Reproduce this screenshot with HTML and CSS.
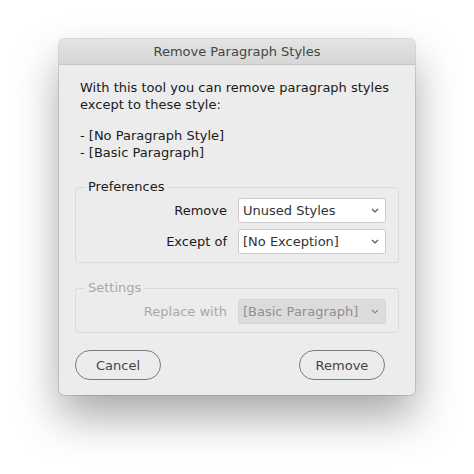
FILE: index.html
```html
<!DOCTYPE html>
<html>
<head>
<meta charset="utf-8">
<link rel="stylesheet" href="styles.css">
</head>
<body>
<div class="dialog">
  <div class="titlebar">Remove Paragraph Styles</div>
  <div class="content">
    <p class="intro">With this tool you can remove paragraph styles<br>except to these style:</p>
    <p class="list">- [No Paragraph Style]<br>- [Basic Paragraph]</p>
    <fieldset class="group">
      <legend>Preferences</legend>
      <div class="grid">
        <label class="lbl">Remove</label>
        <div class="select"><span>Unused Styles</span><svg class="chev" width="8" height="5" viewBox="0 0 8 5"><path d="M1 1l3 3 3-3" fill="none" stroke="#555" stroke-width="1.2"/></svg></div>
        <label class="lbl">Except of</label>
        <div class="select"><span>[No Exception]</span><svg class="chev" width="8" height="5" viewBox="0 0 8 5"><path d="M1 1l3 3 3-3" fill="none" stroke="#555" stroke-width="1.2"/></svg></div>
      </div>
    </fieldset>
    <fieldset class="group disabled">
      <legend>Settings</legend>
      <div class="grid">
        <label class="lbl">Replace with</label>
        <div class="select"><span>[Basic Paragraph]</span><svg class="chev" width="8" height="5" viewBox="0 0 8 5"><path d="M1 1l3 3 3-3" fill="none" stroke="#888" stroke-width="1.2"/></svg></div>
      </div>
    </fieldset>
    <div class="buttons">
      <button class="btn">Cancel</button>
      <button class="btn">Remove</button>
    </div>
  </div>
</div>
</body>
</html>
```

FILE: styles.css
```css
html, body {
  margin: 0;
  padding: 0;
  background: #ffffff;
}
body {
  width: 474px;
  height: 474px;
  font-family: "DejaVu Sans", "Noto Sans", sans-serif;
  font-size: 13px;
  color: #1a1a1a;
}
.dialog {
  margin: 39px 0 0 59px;
  width: 356px;
  height: 356px;
  box-sizing: border-box;
  background: #ececec;
  border-radius: 5px;
  box-shadow: 0 22px 44px rgba(0,0,0,0.34), 0 0 0 1px rgba(0,0,0,0.12);
  overflow: hidden;
}
.titlebar {
  height: 25px;
  line-height: 25px;
  text-align: center;
  background: linear-gradient(#e4e4e4, #d6d6d6);
  border-bottom: 1px solid #c4c4c4;
  color: #444;
  font-size: 13px;
}
.content {
  padding: 14px 16px 0 16px;
}
.intro, .list {
  margin: 0 0 0 5px;
  line-height: 17px;
  color: #1a1a1a;
}
.list {
  margin-top: 14px;
}
.group {
  margin: 18px 0 0 0;
  padding: 0 12px 8px 0;
  border: 1px solid #dadada;
  border-radius: 3px;
  min-width: 0;
}
.group legend {
  margin-left: 9px;
  padding: 0 3px;
  line-height: 16px;
  color: #1a1a1a;
}
.group.disabled {
  margin-top: 17px;
}
.group.disabled legend, .group.disabled .lbl {
  color: #a8a8a8;
}
.grid {
  display: grid;
  grid-template-columns: 1fr 148px;
  column-gap: 11px;
  row-gap: 6px;
  align-items: center;
  padding-top: 3px;
}
.lbl {
  text-align: right;
  color: #1a1a1a;
}
.select {
  height: 25px;
  box-sizing: border-box;
  border: 1px solid #cbcbcb;
  border-radius: 3px;
  background: #ffffff;
  display: flex;
  align-items: center;
  justify-content: space-between;
  padding: 0 6px 0 4px;
  color: #333;
}
.disabled .select {
  background: #dcdcdc;
  border-color: #d4d4d4;
  color: #8f8f8f;
}
.chev {
  display: block;
}
.buttons {
  display: flex;
  justify-content: space-between;
  margin-top: 17px;
  padding-right: 14px;
}
.btn {
  width: 86px;
  height: 30px;
  border: 1.3px solid #7a7a7a;
  border-radius: 15px;
  background: #ececec;
  font-family: "DejaVu Sans", "Noto Sans", sans-serif;
  font-size: 13px;
  color: #444;
  padding: 0;
}
```
